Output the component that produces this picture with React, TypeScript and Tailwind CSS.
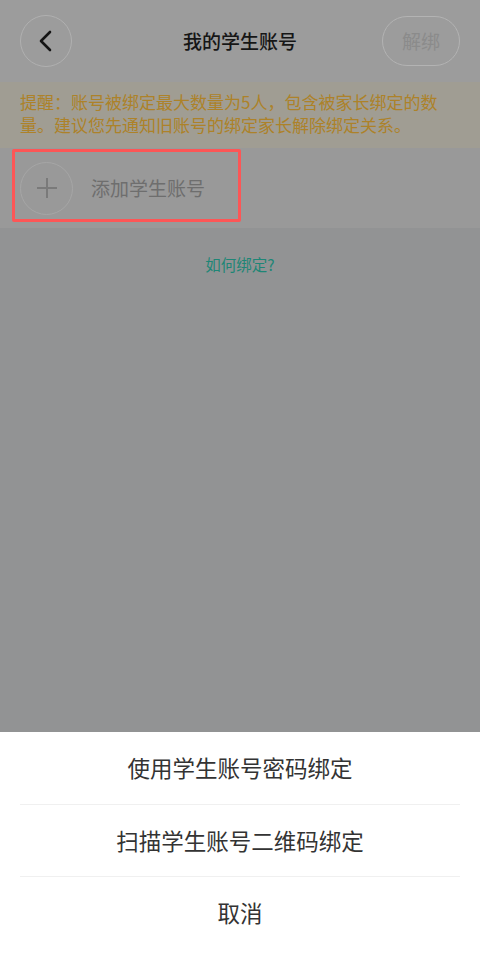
import React from 'react';

const font = { fontFamily: '"Noto Sans CJK SC", "Noto Sans", sans-serif' };

function BackIcon() {
  return (
    <svg width="24" height="24" viewBox="0 0 24 24" fill="none">
      <path d="M16 3 L7 12 L16 21" stroke="#151515" strokeWidth="2.6" strokeLinecap="round" strokeLinejoin="round" />
    </svg>
  );
}

function PlusIcon() {
  return (
    <svg width="22" height="22" viewBox="0 0 22 22" fill="none">
      <path d="M11 1 V21 M1 11 H21" stroke="#7a7a7a" strokeWidth="2" />
    </svg>
  );
}

export default function App() {
  return (
    <div className="w-[480px] h-[960px] flex flex-col bg-[#929394] overflow-hidden" style={font}>
      {/* header */}
      <div className="h-[82px] flex items-center px-5 bg-[#9c9c9c]">
        <div className="flex-1 flex">
          <button className="w-[52px] h-[52px] rounded-full border border-[#b0b0b0] flex items-center justify-center">
            <BackIcon />
          </button>
        </div>
        <div className="text-[19px] text-[#161616] font-medium">我的学生账号</div>
        <div className="flex-1 flex justify-end">
          <button className="w-[78px] h-[50px] rounded-full border border-[#b3b3b3] text-[19px] text-[#8b8b8b] flex items-center justify-center">
            解绑
          </button>
        </div>
      </div>

      {/* tip */}
      <div className="h-[66px] bg-[#a09d93] pl-5 pr-[40px] pt-[8px] text-[17px] leading-[23px] text-[#ad8229]">
        提醒：账号被绑定最大数量为5人，包含被家长绑定的数量。建议您先通知旧账号的绑定家长解除绑定关系。
      </div>

      {/* add account row */}
      <div className="relative h-[80px] bg-[#999999] flex items-center px-5">
        <div className="w-[53px] h-[53px] rounded-full border border-[#a6a6a6] flex items-center justify-center">
          <PlusIcon />
        </div>
        <div className="ml-[18px] text-[19px] text-[#6e6e6e]">添加学生账号</div>
        <div className="absolute left-[12px] top-[1px] w-[229px] h-[73px] border-[3px] border-[#fd5656] rounded-[2px]" />
      </div>

      <div className="mt-[25px] text-center text-[15.5px] text-[#1e8676]">如何绑定?</div>

      <div className="flex-1" />

      {/* action sheet */}
      <div className="bg-white h-[228px] flex flex-col">
        <div className="h-[72px] flex items-center justify-center text-[22.5px] text-[#333333]">使用学生账号密码绑定</div>
        <div className="mx-5 border-t border-[#f0f0f0]" />
        <div className="h-[71px] flex items-center justify-center text-[22.5px] text-[#333333]">扫描学生账号二维码绑定</div>
        <div className="mx-5 border-t border-[#f0f0f0]" />
        <div className="h-[72px] flex items-center justify-center text-[22.5px] text-[#333333]">取消</div>
      </div>
    </div>
  );
}
